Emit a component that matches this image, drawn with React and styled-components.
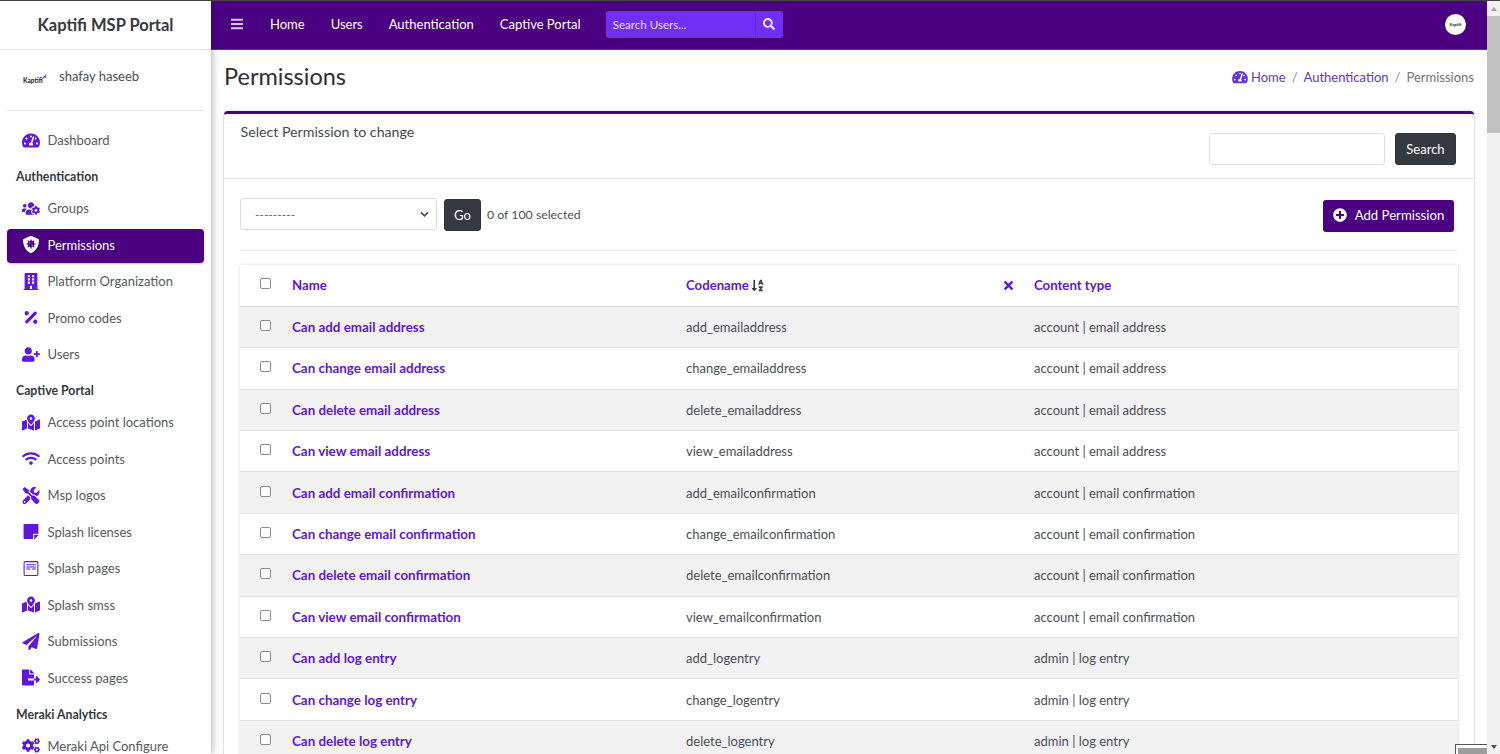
import React from "react";
import styled, { createGlobalStyle } from "styled-components";
import {
  FaBars,
  FaCogs,
  FaBuilding,
  FaFileExport,
  FaMapMarkedAlt,
  FaPaperPlane,
  FaPercentage,
  FaPlusCircle,
  FaSearch,
  FaShieldVirus,
  FaSortAlphaDown,
  FaStickyNote,
  FaTachometerAlt,
  FaTimes,
  FaTools,
  FaUserPlus,
  FaUsersCog,
  FaWifi
} from "react-icons/fa";

const INDIGO = "#4b0082";
const LINK = "#5f17d8";

const GlobalStyle = createGlobalStyle`
  html, body {
    margin: 0;
    height: 100%;
    overflow: hidden;
    background: #fff;
  }
  body {
    font-family: Lato, "Liberation Sans", sans-serif;
    font-size: 13px;
    color: #495057;
  }
  * {
    box-sizing: border-box;
  }
`;

const Page = styled.div`
  display: flex;
  height: 754px;
  overflow: hidden;
  border-top: 1px solid #444;
`;

const Sidebar = styled.aside`
  width: 211px;
  flex: none;
  background: #fff;
  box-shadow: 2px 0 7px rgba(0, 0, 0, 0.25);
  z-index: 2;
`;

const Brand = styled.div`
  height: 49px;
  display: flex;
  align-items: center;
  justify-content: center;
  border-bottom: 1px solid #e6e6e6;
  font-size: 16.5px;
  font-weight: 700;
  color: #343a40;
`;

const UserPanel = styled.div`
  height: 61px;
  margin: 0 7px;
  padding: 18px 0 0 16px;
  display: flex;
  gap: 12px;
  border-bottom: 1px solid #e4e4e4;
`;

const LogoMark = styled.span`
  width: 24px;
  height: 16px;
  margin-top: 3px;
  display: flex;
  align-items: flex-end;
  position: relative;
  font-size: 6.5px;
  font-weight: 900;
  color: #333;
  line-height: 13px;
`;

const Swoosh = styled.svg`
  position: absolute;
  right: 0;
  top: 2px;
  width: 7px;
  height: 7px;
`;

const Nav = styled.nav`
  padding: 13px 7px 0;
`;

const NavItem = styled.div`
  height: 34px;
  margin-bottom: 2.5px;
  display: flex;
  align-items: center;
  padding: 0 0 2px 15px;
  gap: 7.5px;
  border-radius: 4px;
  white-space: nowrap;
  color: ${p => (p.active ? "#fff" : "#555b61")};
  background: ${p => (p.active ? INDIGO : "transparent")};
  box-shadow: ${p => (p.active ? "0 1px 2px rgba(0,0,0,.25)" : "none")};
  svg {
    width: 18px;
    height: 17px;
    flex: none;
    color: ${p => (p.active ? "#fff" : LINK)};
  }
`;

const NavHeader = styled.div`
  height: 29px;
  margin-bottom: 2.5px;
  padding: 8.5px 0 0 9px;
  font-size: 12.3px;
  font-weight: 700;
  color: #343a40;
`;

const Main = styled.div`
  flex: 1;
  min-width: 0;
  display: flex;
  flex-direction: column;
`;

const Topbar = styled.header`
  height: 49px;
  flex: none;
  background: ${INDIGO};
  display: flex;
  align-items: center;
  padding: 0 21px 2px 20px;
  color: #fff;
  border-bottom: 1px solid #5d3a80;
`;

const MenuLink = styled.a`
  color: #fff;
  margin-left: ${p => p.gap ?? 26}px;
  svg {
    display: block;
    width: 12px;
    height: 14px;
    color: #d9c8ea;
  }
`;

const TopSearch = styled.div`
  display: flex;
  width: 177px;
  height: 27px;
  margin-left: 25px;
  background: #6f2ff5;
  border-radius: 3px;
  color: #e7dcff;
  font-size: 11.6px;
`;

const TopSearchText = styled.div`
  flex: 1;
  padding: 0 7px;
  line-height: 28px;
  border-right: 1px solid #6327dd;
`;

const TopSearchButton = styled.div`
  width: 27px;
  display: flex;
  align-items: center;
  justify-content: center;
  color: #f0e9ff;
  svg {
    width: 12px;
    height: 12px;
  }
`;

const Avatar = styled.div`
  margin-left: auto;
  width: 21px;
  height: 21px;
  border-radius: 50%;
  background: #fff;
  color: #333;
  display: flex;
  align-items: center;
  justify-content: center;
  font-size: 4px;
  font-weight: 900;
`;

const Content = styled.main`
  padding: 0 13px;
`;

const TitleRow = styled.div`
  height: 61px;
  display: flex;
  align-items: center;
  justify-content: space-between;
`;

const PageTitle = styled.h1`
  margin: 0 0 10px;
  font-size: 23.5px;
  font-weight: 400;
  color: #2b3035;
`;

const Crumbs = styled.div`
  display: flex;
  align-items: center;
  gap: 6px;
  margin-bottom: 7px;
  color: #6c757d;
`;

const CrumbLink = styled.a`
  color: #6237cf;
  display: flex;
  align-items: center;
  gap: 3px;
  svg {
    width: 16px;
    height: 14px;
  }
`;

const CrumbSlash = styled.span`
  color: #8a9096;
`;

const Card = styled.section`
  border-top: 3px solid ${INDIGO};
  border-radius: 4px;
  box-shadow: 0 0 2px rgba(0, 0, 0, 0.25), 0 1px 3px rgba(0, 0, 0, 0.1);
  background: #fff;
`;

const CardHeader = styled.div`
  height: 65px;
  padding: 9px 18px 0 16.5px;
  display: flex;
  border-bottom: 1px solid #e6e6e6;
`;

const CardTitle = styled.div`
  font-size: 14.2px;
  color: #444a50;
  line-height: 18px;
  margin-right: auto;
`;

const SearchInput = styled.div`
  width: 176px;
  height: 32px;
  margin-top: 10px;
  border: 1px solid #dcdfe2;
  border-radius: 3px;
  background: #fff;
`;

const DarkButton = styled.button`
  height: 32px;
  margin: ${p => p.margin};
  padding: 0;
  width: ${p => p.width}px;
  border: 1px solid #2f3439;
  border-radius: 3px;
  background: #343a40;
  color: #fff;
  font: inherit;
`;

const CardBody = styled.div`
  padding: 0 16px;
`;

const Actions = styled.div`
  height: 72px;
  display: flex;
  padding-top: 19px;
  border-bottom: 1px solid #ececec;
`;

const FakeSelect = styled.div`
  width: 197px;
  height: 32px;
  border: 1px solid #d9dcdf;
  border-radius: 3px;
  padding: 0 7px 0 14px;
  display: flex;
  align-items: center;
  justify-content: space-between;
  color: #666;
  font-size: 12px;
  svg {
    width: 9px;
    height: 6px;
  }
`;

const SelectedCount = styled.span`
  margin: 0 auto 0 6px;
  line-height: 33px;
  font-size: 12.3px;
`;

const AddButton = styled.button`
  width: 131px;
  height: 32px;
  margin: 2px 4px 0 0;
  padding: 0 0 2px;
  display: flex;
  align-items: center;
  justify-content: center;
  gap: 8px;
  border: none;
  border-radius: 3px;
  background: ${INDIGO};
  color: #fff;
  font: inherit;
  font-size: 13.2px;
  svg {
    width: 14px;
    height: 14px;
  }
`;

const Table = styled.table`
  width: 1218px;
  margin-top: 14px;
  border-collapse: collapse;
  table-layout: fixed;
  box-shadow: 0 0 3px rgba(0, 0, 0, 0.18);
`;

const HeadCell = styled.th`
  height: 41.4px;
  padding: 0 ${p => (p.icon ? "8px" : "12px")} 0 12px;
  text-align: left;
  color: ${LINK};
  font-weight: 700;
  font-size: 13.2px;
  border-bottom: 1px solid #d9d9d9;
`;

const HeadInner = styled.div`
  display: flex;
  align-items: center;
  gap: 2px;
  svg {
    width: 13px;
    height: 13px;
  }
`;

const SortIcon = styled(FaSortAlphaDown)`
  color: #343a40;
`;

const ClearIcon = styled(FaTimes)`
  margin-left: auto;
  width: 11px !important;
`;

const Row = styled.tr`
  background: ${p => (p.odd ? "#f2f2f2" : "#fff")};
`;

const Cell = styled.td`
  height: 41.4px;
  padding: 0 12px;
  border-bottom: 1px solid #e2e2e2;
  white-space: nowrap;
`;

const NameLink = styled.a`
  color: ${LINK};
  font-weight: 700;
  font-size: 13.4px;
`;

const CheckBox = styled.span`
  display: block;
  width: 11px;
  height: 11px;
  margin: -3px 0 0 20px;
  border: 1px solid #8d8d8d;
  border-radius: 2px;
  background: #fff;
`;

const ScrollTrack = styled.div`
  width: 13px;
  flex: none;
  background: #f1f1f1;
  display: flex;
  flex-direction: column;
  align-items: center;
`;

const ScrollArrow = styled.div`
  height: 15px;
  padding-top: 6px;
  &::before {
    content: "";
    display: block;
    border: 3px solid transparent;
    border-top: 0;
    border-bottom: 4px solid #a3a3a3;
  }
`;

const ScrollArrowDown = styled.div`
  height: 14px;
  margin-top: auto;
  padding-top: 5px;
  &::before {
    content: "";
    display: block;
    border: 3px solid transparent;
    border-bottom: 0;
    border-top: 4px solid #505050;
  }
`;

const ScrollThumb = styled.div`
  width: 100%;
  height: 117px;
  background: #c1c1c1;
`;

const CornerWidget = styled.div`
  position: absolute;
  right: 13px;
  bottom: 0;
  width: 32px;
  height: 10px;
  padding-top: 3px;
  border: 1px solid #555;
  border-width: 1px 0 0 1px;
  background: #fff;
`;

const CornerFill = styled.div`
  height: 100%;
  margin-left: 2px;
  background: #9c9c9c;
`;

const SplashIcon = () => (
  <svg viewBox="0 0 16 16" fill="none" stroke="currentColor">
    <rect x="1.5" y="1.5" width="13" height="13" rx="1" />
    <path d="M3.5 4.5h9M3.5 6.5h9M3.5 8.5h4M9 8.5h3.5" />
  </svg>
);

const sections = [
  { items: [{ label: "Dashboard", icon: <FaTachometerAlt /> }] },
  {
    title: "Authentication",
    items: [
      { label: "Groups", icon: <FaUsersCog /> },
      { label: "Permissions", icon: <FaShieldVirus />, active: true },
      { label: "Platform Organization", icon: <FaBuilding /> },
      { label: "Promo codes", icon: <FaPercentage /> },
      { label: "Users", icon: <FaUserPlus /> }
    ]
  },
  {
    title: "Captive Portal",
    items: [
      { label: "Access point locations", icon: <FaMapMarkedAlt /> },
      { label: "Access points", icon: <FaWifi /> },
      { label: "Msp logos", icon: <FaTools /> },
      { label: "Splash licenses", icon: <FaStickyNote /> },
      { label: "Splash pages", icon: <SplashIcon /> },
      { label: "Splash smss", icon: <FaMapMarkedAlt /> },
      { label: "Submissions", icon: <FaPaperPlane /> },
      { label: "Success pages", icon: <FaFileExport /> }
    ]
  },
  {
    title: "Meraki Analytics",
    items: [{ label: "Meraki Api Configure", icon: <FaCogs /> }]
  }
];

const rows = [
  ["Can add email address", "add_emailaddress", "account | email address"],
  ["Can change email address", "change_emailaddress", "account | email address"],
  ["Can delete email address", "delete_emailaddress", "account | email address"],
  ["Can view email address", "view_emailaddress", "account | email address"],
  ["Can add email confirmation", "add_emailconfirmation", "account | email confirmation"],
  ["Can change email confirmation", "change_emailconfirmation", "account | email confirmation"],
  ["Can delete email confirmation", "delete_emailconfirmation", "account | email confirmation"],
  ["Can view email confirmation", "view_emailconfirmation", "account | email confirmation"],
  ["Can add log entry", "add_logentry", "admin | log entry"],
  ["Can change log entry", "change_logentry", "admin | log entry"],
  ["Can delete log entry", "delete_logentry", "admin | log entry"]
];

function Logo() {
  return (
    <LogoMark>
      Kaptifi
      <Swoosh viewBox="0 0 8 8">
        <path d="M1 7 L7 1 L7 5 Z" fill="#7d5bd0" />
      </Swoosh>
    </LogoMark>
  );
}

export default function App() {
  return (
    <Page>
      <GlobalStyle />
      <Sidebar>
        <Brand>Kaptifi MSP Portal</Brand>
        <UserPanel>
          <Logo />
          <span>shafay haseeb</span>
        </UserPanel>
        <Nav>
          {sections.map((section, index) => (
            <React.Fragment key={index}>
              {section.title && <NavHeader>{section.title}</NavHeader>}
              {section.items.map(item => (
                <NavItem key={item.label} active={item.active}>
                  {item.icon}
                  {item.label}
                </NavItem>
              ))}
            </React.Fragment>
          ))}
        </Nav>
      </Sidebar>

      <Main>
        <Topbar>
          <MenuLink gap={0}>
            <FaBars />
          </MenuLink>
          <MenuLink gap={27}>Home</MenuLink>
          <MenuLink>Users</MenuLink>
          <MenuLink>Authentication</MenuLink>
          <MenuLink>Captive Portal</MenuLink>
          <TopSearch>
            <TopSearchText>Search Users...</TopSearchText>
            <TopSearchButton>
              <FaSearch />
            </TopSearchButton>
          </TopSearch>
          <Avatar>Kaptifi</Avatar>
        </Topbar>

        <Content>
          <TitleRow>
            <PageTitle>Permissions</PageTitle>
            <Crumbs>
              <CrumbLink>
                <FaTachometerAlt />
                Home
              </CrumbLink>
              <CrumbSlash>/</CrumbSlash>
              <CrumbLink>Authentication</CrumbLink>
              <CrumbSlash>/</CrumbSlash>
              <span>Permissions</span>
            </Crumbs>
          </TitleRow>

          <Card>
            <CardHeader>
              <CardTitle>Select Permission to change</CardTitle>
              <SearchInput />
              <DarkButton width={61} margin="10px 0 0 10px">
                Search
              </DarkButton>
            </CardHeader>
            <CardBody>
              <Actions>
                <FakeSelect>
                  ---------
                  <svg viewBox="0 0 10 6" fill="none" stroke="#444" strokeWidth="1.8">
                    <path d="M1 1l4 4 4-4" />
                  </svg>
                </FakeSelect>
                <DarkButton width={37} margin="1px 0 0 7px">
                  Go
                </DarkButton>
                <SelectedCount>0 of 100 selected</SelectedCount>
                <AddButton>
                  <FaPlusCircle />
                  Add Permission
                </AddButton>
              </Actions>
              <Table>
                <colgroup>
                  <col width="40" />
                  <col width="394" />
                  <col width="348" />
                  <col />
                </colgroup>
                <thead>
                  <tr>
                    <HeadCell style={{ padding: 0 }}>
                      <CheckBox />
                    </HeadCell>
                    <HeadCell>Name</HeadCell>
                    <HeadCell icon>
                      <HeadInner>
                        Codename <SortIcon />
                        <ClearIcon />
                      </HeadInner>
                    </HeadCell>
                    <HeadCell>Content type</HeadCell>
                  </tr>
                </thead>
                <tbody>
                  {rows.map((row, index) => (
                    <Row key={row[1]} odd={index % 2 === 0}>
                      <Cell style={{ padding: 0 }}>
                        <CheckBox />
                      </Cell>
                      <Cell>
                        <NameLink>{row[0]}</NameLink>
                      </Cell>
                      <Cell>{row[1]}</Cell>
                      <Cell>{row[2]}</Cell>
                    </Row>
                  ))}
                </tbody>
              </Table>
            </CardBody>
          </Card>
        </Content>
      </Main>

      <ScrollTrack>
        <ScrollArrow />
        <ScrollThumb />
        <ScrollArrowDown />
      </ScrollTrack>
      <CornerWidget>
        <CornerFill />
      </CornerWidget>
    </Page>
  );
}
